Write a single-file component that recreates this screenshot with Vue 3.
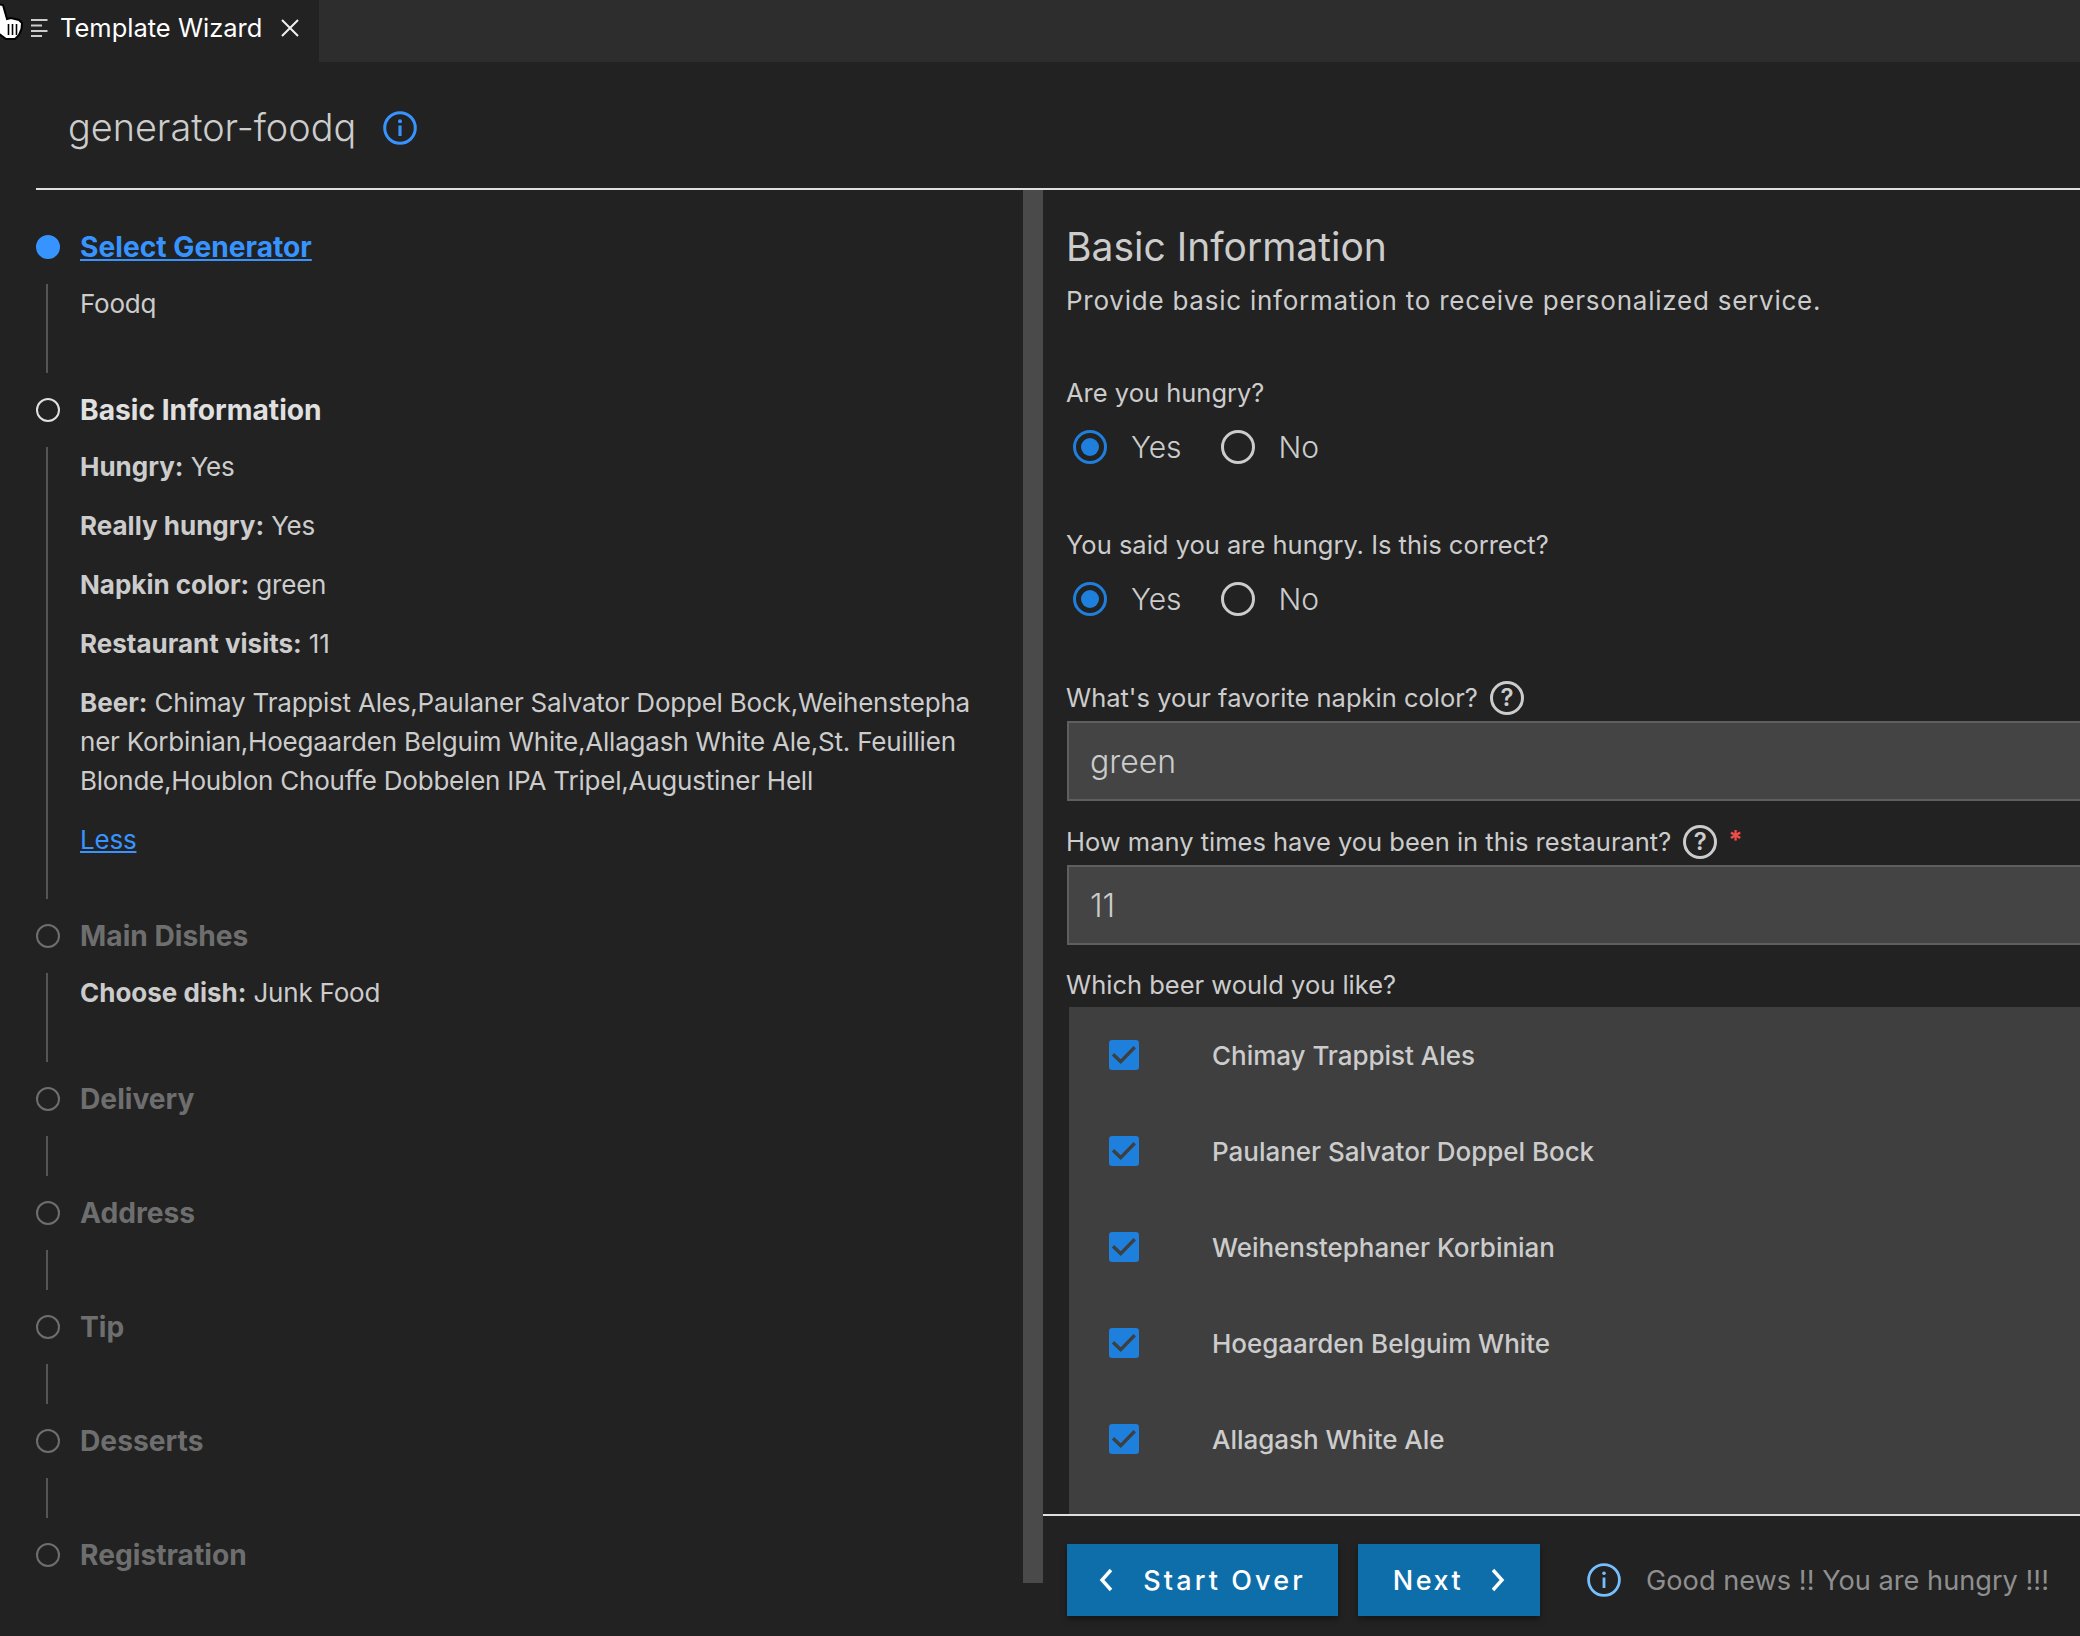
<template>
  <div class="page">
    <div class="tabs">
      <div class="tab">
        <svg class="cursor" viewBox="0 0 23 40" width="23" height="40">
          <path d="M-2 4 L3 5 L7 19 L11 18 L15 19 L19 20 L22 23 L21.5 29 L19 35 L15 39 L6 39 L-2 33 Z" fill="#fff" stroke="#000" stroke-width="2" />
          <path d="M8.5 24v11M12.5 24v11M16.5 24v11" stroke="#000" stroke-width="1.6" />
        </svg>
        <svg class="tab-icon" viewBox="0 0 17 18" width="17" height="18">
          <path d="M0 1h16.5M0 6.5h11M0 12h16.5M0 17h11" stroke="#cccccc" stroke-width="2" fill="none" />
        </svg>
        <span class="tab-title">Template Wizard</span>
        <svg class="tab-close" viewBox="0 0 18 18" width="18" height="18">
          <path d="M1 1l16 16M17 1L1 17" stroke="#f0f0f0" stroke-width="2" fill="none" />
        </svg>
      </div>
    </div>

    <div class="header">
      <span class="generator-name">generator-foodq</span>
      <svg class="info-icon" viewBox="0 0 34 34" width="34" height="34">
        <circle cx="17" cy="17" r="15.3" fill="none" stroke="#3794ff" stroke-width="3" />
        <rect x="15.4" y="14.5" width="3.2" height="10.5" fill="#3794ff" />
        <circle cx="17" cy="10.2" r="2" fill="#3794ff" />
      </svg>
    </div>
    <div class="rule"></div>

    <div class="main">
      <div class="steps">
        <div v-for="step in steps" :key="step.title" class="step" :class="step.state">
          <div class="step-head">
            <span class="step-dot"></span>
            <span class="step-title">{{ step.title }}</span>
          </div>
          <div v-if="step.title !== 'Registration'" class="step-body" :class="{ 'has-rows': step.rows }">
            <p v-for="row in step.rows" :key="row.label || row.value" class="row">
              <strong v-if="row.label">{{ row.label }}:</strong> {{ row.value }}
            </p>
            <p v-if="step.beer" class="row">
              <strong>Beer:</strong> Chimay Trappist Ales,Paulaner Salvator Doppel Bock,Weihenstepha<br />ner Korbinian,Hoegaarden Belguim White,Allagash White Ale,St. Feuillien<br />Blonde,Houblon Chouffe Dobbelen IPA Tripel,Augustiner Hell
            </p>
            <p v-if="step.beer" class="row"><a class="less">Less</a></p>
          </div>
        </div>
      </div>
      <div class="scrollbar"></div>

      <div class="content">
        <div class="form">
          <h2 class="form-title">Basic Information</h2>
          <p class="form-desc">Provide basic information to receive personalized service.</p>

          <div class="radio-question first">
            <label class="field-label">Are you hungry?</label>
            <div class="radios">
              <span class="radio on"></span><span class="radio-text">Yes</span>
              <span class="radio"></span><span class="radio-text">No</span>
            </div>
          </div>
          <div class="radio-question">
            <label class="field-label">You said you are hungry. Is this correct?</label>
            <div class="radios">
              <span class="radio on"></span><span class="radio-text">Yes</span>
              <span class="radio"></span><span class="radio-text">No</span>
            </div>
          </div>

          <label class="field-label help-label napkin">
            What's your favorite napkin color?
            <span class="help">?</span>
          </label>
          <input class="text-input" value="green" readonly />

          <label class="field-label help-label visits">
            How many times have you been in this restaurant?
            <span class="help">?</span>
            <span class="required">*</span>
          </label>
          <input class="text-input" value="11" readonly />

          <label class="field-label beer-label">Which beer would you like?</label>
          <div class="beer-list">
            <div v-for="beer in beers" :key="beer" class="beer-row">
              <span class="check">
                <svg viewBox="0 0 30 30" width="30" height="30">
                  <path d="M4 14.3l7.7 7.4L25.7 7.3" fill="none" stroke="#3f3f3f" stroke-width="3.4" />
                </svg>
              </span>
              <span class="beer-name">{{ beer }}</span>
            </div>
          </div>
        </div>

        <div class="footer">
          <button class="btn">
            <svg viewBox="0 0 14 24" width="14" height="24"><path d="M12 2L3 12l9 10" fill="none" stroke="#fff" stroke-width="3.4" /></svg>
            <span class="btn-left">Start Over</span>
          </button>
          <button class="btn btn-next">
            <span class="btn-right">Next</span>
            <svg viewBox="0 0 14 24" width="14" height="24"><path d="M2 2l9 10-9 10" fill="none" stroke="#fff" stroke-width="3.4" /></svg>
          </button>
          <svg class="msg-icon" viewBox="0 0 34 34" width="34" height="34">
            <circle cx="17" cy="17" r="15.4" fill="none" stroke="#75beff" stroke-width="2.8" />
            <rect x="15.6" y="14.5" width="2.8" height="10.5" fill="#75beff" />
            <circle cx="17" cy="10.2" r="1.8" fill="#75beff" />
          </svg>
          <span class="msg">Good news !! You are hungry !!!</span>
        </div>
      </div>
    </div>
  </div>
</template>

<script setup>
const steps = [
  { title: 'Select Generator', state: 'active', rows: [{ value: 'Foodq' }] },
  {
    title: 'Basic Information',
    state: 'current',
    beer: true,
    rows: [
      { label: 'Hungry', value: 'Yes' },
      { label: 'Really hungry', value: 'Yes' },
      { label: 'Napkin color', value: 'green' },
      { label: 'Restaurant visits', value: '11' },
    ],
  },
  { title: 'Main Dishes', state: 'dim', rows: [{ label: 'Choose dish', value: 'Junk Food' }] },
  { title: 'Delivery', state: 'dim' },
  { title: 'Address', state: 'dim' },
  { title: 'Tip', state: 'dim' },
  { title: 'Desserts', state: 'dim' },
  { title: 'Registration', state: 'dim' },
]

const beers = [
  'Chimay Trappist Ales',
  'Paulaner Salvator Doppel Bock',
  'Weihenstephaner Korbinian',
  'Hoegaarden Belguim White',
  'Allagash White Ale',
]
</script>

<style>
html,
body {
  background: #222222;
}
</style>

<style scoped>
.page {
  width: 2080px;
  height: 1636px;
  overflow: hidden;
  background: #222222;
  color: #cccccc;
  font-family: Inter, "Noto Sans", sans-serif;
  font-size: 26px;
}

.tabs {
  height: 62px;
  background: #2d2d2d;
}

.tab {
  position: relative;
  width: 319px;
  height: 62px;
  background: #222222;
  display: flex;
  align-items: center;
  padding: 0 0 7px 31px;
  box-sizing: border-box;
}

.cursor {
  position: absolute;
  left: 0;
  top: 0;
}

.tab-title {
  margin-left: 12px;
  color: #ffffff;
  font-size: 25.5px;
}

.tab-close {
  margin-left: 19px;
}

.header {
  height: 126px;
  padding-left: 68px;
  padding-top: 6px;
  box-sizing: border-box;
  display: flex;
  align-items: center;
  gap: 27px;
}

.generator-name {
  font-size: 37.8px;
  font-weight: 300;
  margin-top: -2px;
}

.rule {
  margin-left: 36px;
  height: 2px;
  background: #e0e0e0;
}

.main {
  display: flex;
  height: 1446px;
}

.steps {
  width: 987px;
  margin-left: 36px;
  padding-top: 32px;
  box-sizing: border-box;
  flex-shrink: 0;
}

.step-head {
  height: 50px;
  display: flex;
  align-items: center;
  gap: 20px;
}

.step-dot {
  width: 24px;
  height: 24px;
  border-radius: 50%;
  border: 2px solid #e0e0e0;
  box-sizing: border-box;
}

.step-title {
  font-size: 28.2px;
  font-weight: 700;
  color: #e0e0e0;
}

.active .step-dot {
  background: #3794ff;
  border-color: #3794ff;
}

.active .step-title {
  color: #3794ff;
  text-decoration: underline;
}

.dim .step-dot {
  border-color: #6e6e6e;
}

.dim .step-title {
  color: #6e6e6e;
}

.step-body {
  margin: 12px 0 12px 10px;
  border-left: 2px solid #555555;
  padding: 0 0 40px 32px;
  min-height: 40px;
  box-sizing: border-box;
}

.step-body.has-rows {
  min-height: 89px;
}

.row {
  margin: 0 0 20px;
  line-height: 39px;
  letter-spacing: -0.22px;
}

.row:last-child {
  margin-bottom: 0;
}

.row strong {
  font-weight: 700;
  letter-spacing: 0;
}

.less {
  color: #3794ff;
  text-decoration: underline;
}

.step:nth-child(n + 4) .step-body {
  padding-bottom: 0;
}

.scrollbar {
  width: 20px;
  height: 1393px;
  background: #4a4a4a;
  flex-shrink: 0;
}

.content {
  flex: 1;
  min-width: 0;
  display: flex;
  flex-direction: column;
}

.form {
  height: 1326px;
  flex-shrink: 0;
  padding-left: 23px;
  border-bottom: 2px solid #e0e0e0;
  box-sizing: border-box;
  overflow: hidden;
}

.form-title {
  margin: 32px 0 0;
  font-size: 39px;
  font-weight: 400;
  line-height: 50px;
}

.form-desc {
  margin: 9px 0 0;
  line-height: 40px;
  letter-spacing: 0.76px;
}

.field-label {
  display: block;
  line-height: 32px;
  font-size: 25.5px;
}

.radio-question {
  height: 152px;
}

.radio-question.first {
  margin-top: 56px;
}

.radios {
  display: flex;
  align-items: center;
  margin-top: 18px;
  padding-left: 7px;
  height: 40px;
}

.radio {
  width: 34px;
  height: 34px;
  border-radius: 50%;
  border: 3px solid #cccccc;
  box-sizing: border-box;
  display: flex;
  align-items: center;
  justify-content: center;
}

.radio.on {
  border-color: #1e7fdc;
}

.radio.on::after {
  content: "";
  width: 18px;
  height: 18px;
  border-radius: 50%;
  background: #1e7fdc;
}

.radio-text {
  margin: 0 39px 0 24px;
  font-size: 30px;
  font-weight: 300;
}

.help-label {
  display: flex;
  align-items: center;
  gap: 12px;
  height: 34px;
}

.help {
  width: 34px;
  height: 34px;
  border: 3px solid #cccccc;
  border-radius: 50%;
  box-sizing: border-box;
  display: flex;
  align-items: center;
  justify-content: center;
  font-size: 24px;
  font-weight: 600;
}

.required {
  color: #f14c4c;
  align-self: flex-start;
  line-height: 24px;
  margin: 3px 0 0 -1px;
  font-weight: 700;
}

.text-input {
  display: block;
  width: calc(100% + 10px);
  height: 80px;
  margin: 6px 0 0 1px;
  padding: 0 0 0 21px;
  border: 2px solid #5f5f5f;
  background: #444444;
  color: #cccccc;
  font-family: inherit;
  font-size: 32px;
  font-weight: 300;
  box-sizing: border-box;
  outline: none;
}

.visits {
  margin-top: 24px;
}

.beer-label {
  margin-top: 24px;
}

.beer-list {
  margin: 6px 0 0 3px;
  padding-top: 0;
  height: 520px;
  background: #3f3f3f;
}

.beer-row {
  height: 96px;
  display: flex;
  align-items: center;
  padding-left: 40px;
}

.check {
  width: 30px;
  height: 30px;
  background: #1e7fdc;
  border-radius: 3px;
  flex-shrink: 0;
}

.check svg {
  display: block;
}

.beer-name {
  margin-left: 73px;
  font-weight: 500;
  letter-spacing: -0.03px;
}

.footer {
  display: flex;
  align-items: flex-start;
  height: 120px;
  padding: 28px 0 0 24px;
  box-sizing: border-box;
}

.btn {
  height: 72px;
  width: 271px;
  border: none;
  background: #0e6eaa;
  color: #ffffff;
  font-family: inherit;
  font-size: 27px;
  font-weight: 500;
  letter-spacing: 2.5px;
  display: flex;
  align-items: center;
  justify-content: center;
  box-shadow: 0 3px 6px rgba(0, 0, 0, 0.4);
}

.btn-left {
  margin-left: 30px;
  letter-spacing: 3.1px;
}

.btn-right {
  margin-right: 28px;
}

.btn-next {
  width: 182px;
  margin-left: 20px;
}

.msg-icon {
  margin: 19px 0 0 47px;
}

.msg {
  margin-left: 25px;
  padding-top: 1px;
  color: #8f8f8f;
  white-space: nowrap;
  font-size: 27.2px;
  line-height: 72px;
}
</style>
